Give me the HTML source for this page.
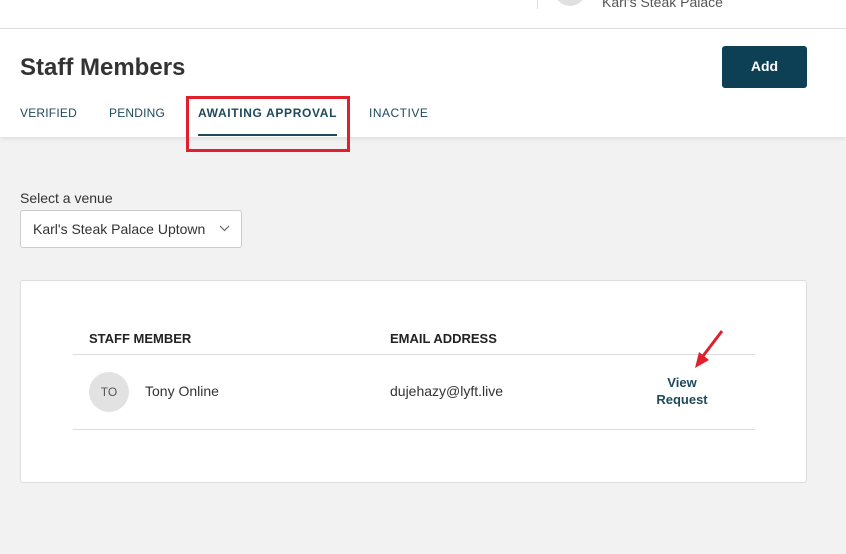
<!DOCTYPE html>
<html><head><meta charset="utf-8"><style>
*{box-sizing:border-box;margin:0;padding:0}
body{width:846px;height:554px;overflow:hidden;background:#f2f2f2;font-family:"Liberation Sans",sans-serif;color:#333;position:relative}
.top{position:absolute;left:0;top:0;width:846px;height:29px;background:#fff;border-bottom:1px solid #e0e0e0}
.head{position:absolute;left:0;top:29px;width:846px;height:108px;background:#fff;box-shadow:0 2px 4px rgba(0,0,0,.08)}
.abs{position:absolute}
</style></head><body>
<div class="top">
 <div class="abs" style="left:537px;top:0;width:1px;height:9px;background:#ddd"></div>
 <div class="abs" style="left:555px;top:-22px;width:30px;height:28px;border-radius:50%;background:#e0e0e0"></div>
 <div class="abs" style="left:602px;top:-6px;font-size:14px;color:#555">Karl's Steak Palace</div>
</div>
<div class="head">
 <div class="abs" style="left:20px;top:25px;font-size:24px;font-weight:bold;color:#333">Staff Members</div>
 <div class="abs" style="left:722px;top:17px;width:85px;height:42px;background:#0d3f55;border-radius:3px;color:#fff;font-weight:bold;font-size:14px;text-align:center;line-height:40px">Add</div>
 <div class="abs" style="left:20px;top:77px;font-size:12px;letter-spacing:.2px;color:#1e4a5c">VERIFIED</div>
 <div class="abs" style="left:109px;top:77px;font-size:12px;letter-spacing:.2px;color:#1e4a5c">PENDING</div>
 <div class="abs" style="left:198px;top:77px;font-size:12px;letter-spacing:.65px;font-weight:bold;color:#1e4a5c">AWAITING APPROVAL</div>
 <div class="abs" style="left:198px;top:105px;width:139px;height:2px;background:#1e4a5c"></div>
 <div class="abs" style="left:369px;top:77px;font-size:12px;letter-spacing:.5px;color:#1e4a5c">INACTIVE</div>
 <div class="abs" style="left:186px;top:67px;width:164px;height:56px;border:3px solid #e0202c"></div>
</div>
<div class="abs" style="left:20px;top:190px;font-size:14px;color:#333">Select a venue</div>
<div class="abs" style="left:20px;top:210px;width:222px;height:38px;background:#fff;border:1px solid #ccc;border-radius:3px;font-size:14px;line-height:36px;padding-left:12px;color:#333">Karl's Steak Palace Uptown
 <svg class="abs" style="left:198px;top:14px" width="11" height="7"><path d="M1 1l4.5 4.5L10 1" fill="none" stroke="#666" stroke-width="1.2"/></svg></div>
<div class="abs" style="left:20px;top:280px;width:787px;height:203px;background:#fff;border:1px solid #ddd;border-radius:3px">
 <div class="abs" style="left:68px;top:50px;font-size:13px;font-weight:bold;color:#222">STAFF MEMBER</div>
 <div class="abs" style="left:369px;top:50px;font-size:13px;font-weight:bold;color:#222">EMAIL ADDRESS</div>
 <div class="abs" style="left:52px;top:73px;width:682px;height:1px;background:#ddd"></div>
 <div class="abs" style="left:68px;top:91px;width:40px;height:40px;border-radius:50%;background:#e2e2e2;font-size:12px;color:#555;text-align:center;line-height:40px">TO</div>
 <div class="abs" style="left:124px;top:102px;font-size:14px;color:#333">Tony Online</div>
 <div class="abs" style="left:369px;top:102px;font-size:14px;color:#333">dujehazy@lyft.live</div>
 <div class="abs" style="left:620px;top:93px;width:82px;text-align:center;font-size:13px;font-weight:bold;color:#1e4a5c;line-height:17px">View<br>Request</div>
 <div class="abs" style="left:52px;top:148px;width:682px;height:1px;background:#ddd"></div>
</div>
<svg class="abs" style="left:690px;top:328px" width="36" height="44"><path d="M32 3L13 28" stroke="#e0202c" stroke-width="3" fill="none"/><path d="M5 40l4-16 10 8z" fill="#e0202c"/></svg>
</body></html>
